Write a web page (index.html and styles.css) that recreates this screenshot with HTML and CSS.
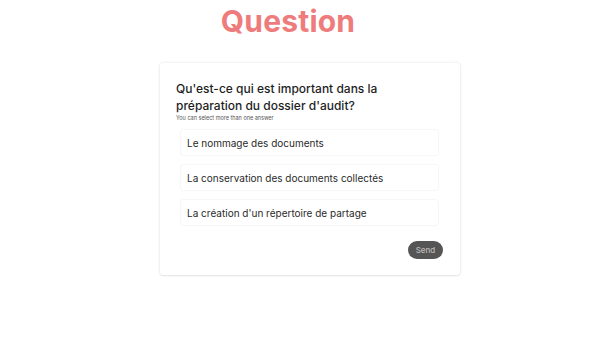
FILE: index.html
```html
<!DOCTYPE html>
<html>
<head>
<meta charset="utf-8">
<link rel="stylesheet" href="styles.css">
</head>
<body>
<div class="page">
  <h1 class="title">Question</h1>
  <div class="card">
    <h2 class="question">Qu'est-ce qui est important dans la préparation du dossier d'audit?</h2>
    <p class="hint">You can select more than one answer</p>
    <div class="options">
      <div class="option">Le nommage des documents</div>
      <div class="option">La conservation des documents collectés</div>
      <div class="option">La création d'un répertoire de partage</div>
    </div>
    <div class="actions">
      <button class="send">Send</button>
    </div>
  </div>
</div>
</body>
</html>
```

FILE: styles.css
```css
html, body {
  margin: 0;
  padding: 0;
  background: #fff;
}
body {
  font-family: Inter, "Liberation Sans", sans-serif;
  color: #222;
}
.page {
  width: 600px;
  height: 338px;
  display: flex;
  flex-direction: column;
  align-items: center;
}
.title {
  margin: 3px 0 0 -24px;
  font-size: 30px;
  font-weight: 700;
  color: #ee7c7c;
  line-height: 36px;
  letter-spacing: 0.2px;
}
.card {
  margin: 24px 0 0 20px;
  width: 300px;
  box-sizing: border-box;
  padding: 17px 16px 16px 16px;
  background: #fff;
  border-radius: 3px;
  box-shadow: 0 0 3px rgba(0,0,0,0.12), 0 1px 2px rgba(0,0,0,0.06);
}
.question {
  margin: 0;
  font-size: 12px;
  font-weight: 500;
  line-height: 17px;
  color: #1e1e1e;
}
.hint {
  margin: 1px 0 0 0;
  font-size: 5.5px;
  line-height: 7px;
  color: #555;
}
.options {
  display: flex;
  flex-direction: column;
  gap: 10px;
  margin: 8px 6px 0 5px;
}
.option {
  height: 25px;
  box-sizing: border-box;
  padding: 0 6px;
  display: flex;
  align-items: center;
  font-size: 10px;
  color: #2a2a2a;
  background: #fff;
  border-radius: 2px;
  box-shadow: 0 0 2px rgba(0,0,0,0.13);
}
.actions {
  display: flex;
  justify-content: flex-end;
  margin-top: 16px;
  margin-right: 1px;
}
.send {
  width: 35px;
  height: 18px;
  border: none;
  border-radius: 9px;
  background: #555;
  color: #bbb;
  font-family: Inter, "Liberation Sans", sans-serif;
  font-size: 8px;
  font-weight: 500;
  padding: 0;
}
```
